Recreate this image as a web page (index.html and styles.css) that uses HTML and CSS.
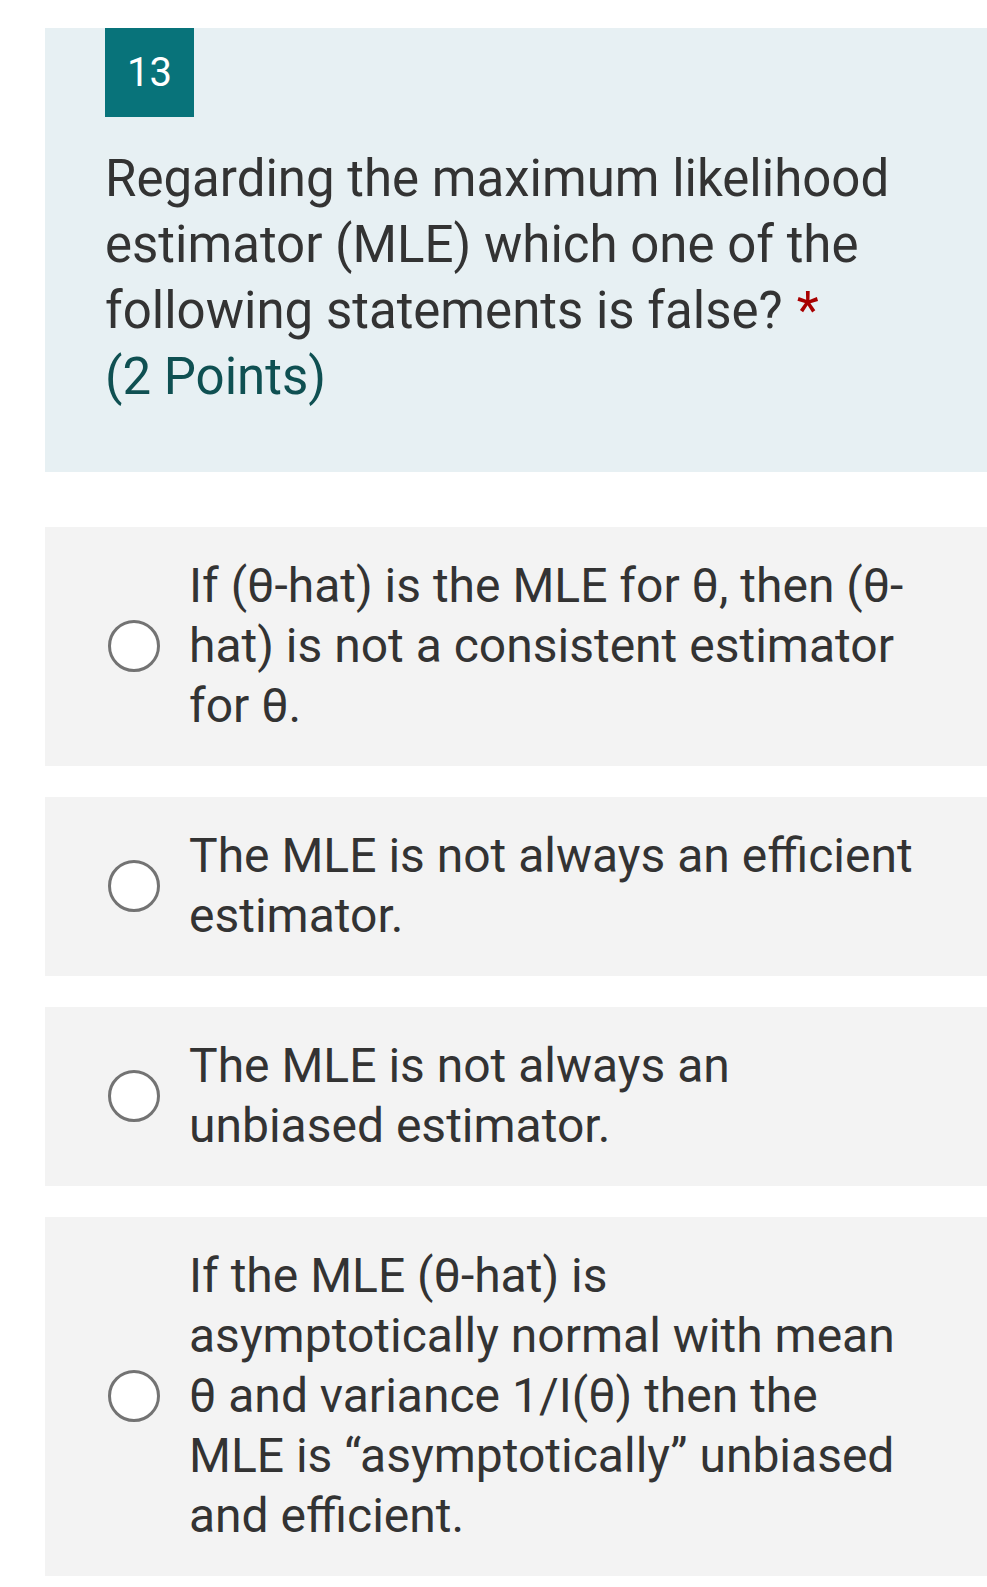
FILE: index.html
```html
<!DOCTYPE html>
<html lang="en">
<head>
<meta charset="utf-8">
<title>Question 13</title>
<link rel="stylesheet" href="styles.css">
</head>
<body>
<main class="page">
  <section class="question">
    <div class="badge">13</div>
    <h1 class="question-title">Regarding the maximum likelihood estimator (MLE) which one of the following statements is false?<span class="required">*</span><br><span class="points">(2 Points)</span></h1>
  </section>
  <ul class="options">
    <li class="option"><span class="radio"></span><span class="option-text">If (θ-hat) is the MLE for θ, then (θ-hat) is not a consistent estimator for θ.</span></li>
    <li class="option"><span class="radio"></span><span class="option-text">The MLE is not always an efficient estimator.</span></li>
    <li class="option"><span class="radio"></span><span class="option-text">The MLE is not always an unbiased estimator.</span></li>
    <li class="option"><span class="radio"></span><span class="option-text">If the MLE (θ-hat) is asymptotically normal with mean θ and variance 1/I(θ) then the MLE is “asymptotically” unbiased and efficient.</span></li>
  </ul>
</main>
</body>
</html>
```

FILE: styles.css
```css
html, body {
  margin: 0;
  padding: 0;
  background: #ffffff;
}
body {
  font-family: Roboto, "Noto Sans", "Liberation Sans", sans-serif;
  color: #333333;
  overflow-x: hidden;
}
.page {
  padding: 28px 0 12px 45px;
}
.question {
  background: #e7f0f3;
  padding: 0 0 62px 60px;
}
.badge {
  width: 89px;
  height: 89px;
  background: #08737a;
  color: #ffffff;
  font-size: 40px;
  display: flex;
  align-items: center;
  justify-content: center;
}
.question-title {
  margin: 29px 0 0 0;
  width: 815px;
  font-weight: 400;
  font-size: 51px;
  line-height: 66px;
  color: #333333;
}
.required {
  color: #a80000;
  margin-left: 14px;
}
.points {
  color: #0f5052;
}
.options {
  list-style: none;
  margin: 55px 0 0 0;
  padding: 0;
  display: flex;
  flex-direction: column;
  gap: 31px;
}
.option {
  background: #f3f3f3;
  display: flex;
  align-items: center;
  gap: 29px;
  padding: 29px 0 30px 63px;
}
.radio {
  flex: none;
  width: 46px;
  height: 46px;
  border: 3px solid #737373;
  border-radius: 50%;
  background: #ffffff;
}
.option-text {
  width: 726px;
  font-size: 48px;
  line-height: 60px;
}
```
